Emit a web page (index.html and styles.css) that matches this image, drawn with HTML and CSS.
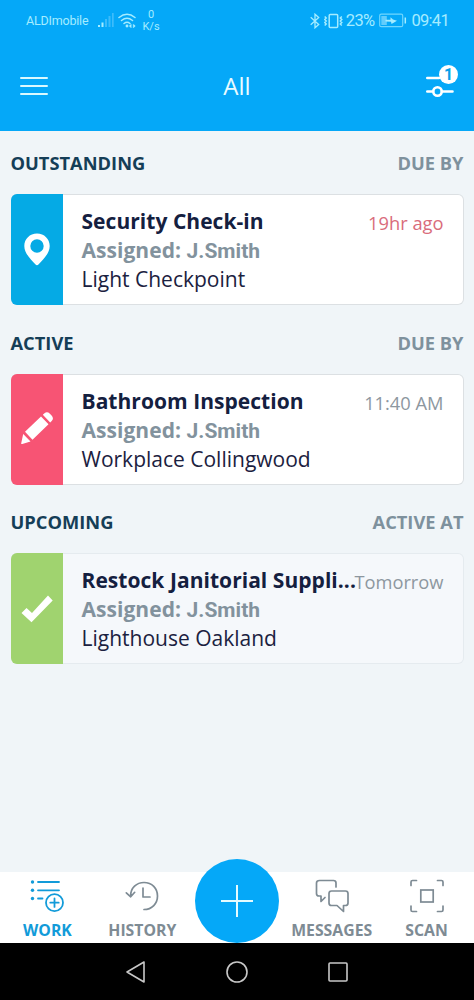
FILE: index.html
```html
<!DOCTYPE html>
<html lang="en">
<head>
<meta charset="utf-8">
<title>All work</title>
<link rel="stylesheet" href="styles.css">
</head>
<body>
<div class="phone">
  <header class="top">
    <div class="status">
      <span class="carrier">ALDImobile</span>
      <svg class="signal" width="16" height="15" viewBox="0 0 16 15"><path d="M0 12h2v2H0zM3.500 9.500h2V14h-2z" fill="#a5ecff"/><path d="M7 6h2v8H7zM10.500 3h2v11h-2zM14 0h1.700v14H14z" fill="#3dbcfb"/></svg>
      <svg class="wifi" width="18" height="15" viewBox="0 0 18 15" fill="none" stroke="#a5ecff" stroke-width="1.500" stroke-linecap="round"><path d="M1 4.500q8-6.500 16 0M3.500 7.500q5.500-4.500 11 0M6 10.500q3-2.500 6 0"/><circle cx="9" cy="13" r=".7"/><path d="M13 12l-1 1 1 1M15.500 12l1 1-1 1"/></svg>
      <span class="speed"><span>0</span><span>K/s</span></span>
      <span class="grow"></span>
      <svg class="bt" width="10" height="16" viewBox="0 0 10 16" fill="none" stroke="#a5ecff" stroke-width="1.300"><path d="M.7 4.200l8 7.300L5 14.800V1.200l3.700 3.300-8 7.300"/></svg>
      <svg class="vibrate" width="19" height="16" viewBox="0 0 19 16" fill="none" stroke="#a5ecff" stroke-width="1.500"><rect x="5.200" y="1.500" width="8.500" height="13" rx="1"/><path d="M.7 3.500l1.500 1.500-1.500 1.500L2.200 8 .7 9.500l1.500 1.500-1.500 1.500M17.800 3.500L16.300 5l1.500 1.500L16.300 8l1.500 1.500-1.500 1.500 1.500 1.500"/></svg>
      <span class="pct">23%</span>
      <svg class="battery" width="28" height="15" viewBox="0 0 28 15"><rect x=".7" y="1.200" width="23" height="12.500" rx="1.500" fill="none" stroke="#70d6fd" stroke-width="1.200"/><path d="M2.300 3h5.500v9H2.300z" fill="#62cdfc"/><path d="M6.500 6.700l5 .1V4.200L14 6.500l4 1.200-5.500 3.300-.5-2.200-5.500-.3z" fill="#a5ecff"/><path d="M26.300 4.500v6" stroke="#a5ecff" stroke-width="1.500"/></svg>
      <span class="clock">09:41</span>
    </div>
    <div class="bar">
      <svg width="28" height="20" viewBox="0 0 28 20" stroke="#d9f9ff" stroke-width="2" stroke-linecap="round"><path d="M1 2h26M1 10h26M1 18h26"/></svg>
      <h1>All</h1>
      <div class="filter">
        <svg width="28" height="22" viewBox="0 0 28 22" fill="none" stroke="#fff" stroke-width="2.600" stroke-linecap="round"><path d="M1.300 3H13M1.300 16.500H7M16 16.500h10.500"/><circle cx="11.500" cy="16.500" r="4.200"/></svg>
        <span class="badge">1</span>
      </div>
    </div>
  </header>

  <main>
    <section>
      <div class="head"><h2>OUTSTANDING</h2><span>DUE BY</span></div>
      <article class="card">
        <div class="tag blue"><svg width="28" height="34" viewBox="0 0 28 34"><path fill="#fff" fill-rule="evenodd" d="M14 .5C6.800.5 1.300 6 1.300 13 1.300 20.500 8 26.500 12.300 31.300q1.700 1.800 3.400 0C20 26.500 26.700 20.500 26.700 13 26.700 6 21.200.5 14 .5zm0 5.800a6.700 6.700 0 1 1 0 13.400 6.700 6.700 0 0 1 0-13.400z"/></svg></div>
        <div class="body">
          <h3>Security Check-in</h3><time class="late">19hr ago</time>
          <p class="who">Assigned: <span>J.Smith</span></p>
          <p class="place">Light Checkpoint</p>
        </div>
      </article>
    </section>
    <section>
      <div class="head"><h2>ACTIVE</h2><span>DUE BY</span></div>
      <article class="card">
        <div class="tag pink"><svg width="34" height="34" viewBox="0 0 34 34" fill="#fff"><path d="M1.200 31.300l2-9.300 7.300 7.400-8.200 2.600q-1.200.2-1.100-.7zM5 19.800L21 4.500l7.500 7.800-16 15.500zM22.800 2.800l1.700-1.600q2.600-2.200 5.400.5l1.700 1.900q2.600 2.900.1 5.400l-1.500 1.600z"/></svg></div>
        <div class="body">
          <h3>Bathroom Inspection</h3><time>11:40 AM</time>
          <p class="who">Assigned: <span>J.Smith</span></p>
          <p class="place">Workplace Collingwood</p>
        </div>
      </article>
    </section>
    <section>
      <div class="head"><h2>UPCOMING</h2><span>ACTIVE AT</span></div>
      <article class="card dim">
        <div class="tag green"><svg width="32" height="28" viewBox="0 0 32 28"><path fill="#fff" d="M.5 18l5-5 5.500 5L27 .5l4.700 5L10.500 27.300z"/></svg></div>
        <div class="body">
          <h3>Restock Janitorial Suppli...</h3><time>Tomorrow</time>
          <p class="who">Assigned: <span>J.Smith</span></p>
          <p class="place">Lighthouse Oakland</p>
        </div>
      </article>
    </section>
  </main>

  <nav class="tabs">
    <a class="tab on"><svg width="34" height="34" viewBox="0 0 34 34" fill="none" stroke="#129bd9" stroke-width="1.800" stroke-linecap="round"><path d="M8 3h21M8 11.300h21M8 19.500h4.500"/><g fill="#129bd9" stroke="none"><circle cx="2.500" cy="3" r="1.700"/><circle cx="2.500" cy="11.300" r="1.700"/><circle cx="2.500" cy="19.500" r="1.700"/></g><circle cx="24.500" cy="23.700" r="8.500"/><path d="M24.500 19.500v8.400M20.300 23.700h8.400"/></svg><span>WORK</span></a>
    <a class="tab"><svg width="34" height="34" viewBox="0 0 34 34" fill="none" stroke="#7e8b94" stroke-width="1.700" stroke-linecap="round" stroke-linejoin="round"><path d="M5.700 16.500C5.700 9 11.500 3.500 19 3.500c8 0 13.500 6 13.500 13.500S27 30.500 19 30.500M1.300 13.800l4.400 4 4-4.500M18 9v9h7"/></svg><span>HISTORY</span></a>
    <button class="add" aria-label="Add"><svg width="34" height="34" viewBox="0 0 34 34" stroke="#e5fbff" stroke-width="2"><path d="M17 1v32M1 17h32"/></svg></button>
    <a class="tab"><svg width="34" height="34" viewBox="0 0 34 34" fill="none" stroke="#7e8b94" stroke-width="1.700" stroke-linejoin="round" stroke-linecap="round"><path d="M21 8V4q0-2.500-2.500-2.500h-14Q1.500 1.500 1.500 4v10.500q0 2.500 2.500 2.500h2v5.500l4-4M16.500 12H30.500q2.500 0 2.500 2.500V24q0 2.500-2.500 2.500h-2v6l-6.500-6h-5.500q-2.500 0-2.500-2.500v-9.500q0-2.500 2.500-2.500z"/></svg><span>MESSAGES</span></a>
    <a class="tab"><svg width="34" height="34" viewBox="0 0 34 34" fill="none" stroke="#7e8b94" stroke-width="1.700" stroke-linecap="round"><path d="M1 6.500V3q0-1.500 1.500-1.500H6.500M27.500 1.500h4q1.500 0 1.500 1.500v3.500M33 27v4q0 1.500-1.500 1.500h-4M6.500 32.500h-4Q1 32.500 1 31v-4"/><rect x="10.800" y="11" width="12.400" height="12"/></svg><span>SCAN</span></a>
  </nav>

  <footer class="system">
    <svg width="22" height="24" viewBox="0 0 22 24" fill="none" stroke="#c8c8c8" stroke-width="1.600" stroke-linejoin="round"><path d="M19 2v20L2 12z"/></svg>
    <svg width="24" height="24" viewBox="0 0 24 24" fill="none" stroke="#c8c8c8" stroke-width="1.600"><circle cx="12" cy="12" r="10"/></svg>
    <svg width="22" height="24" viewBox="0 0 22 24" fill="none" stroke="#c8c8c8" stroke-width="1.600"><rect x="2" y="3" width="18" height="18" rx="1"/></svg>
  </footer>
</div>
</body>
</html>
```
FILE: styles.css
```css
* { box-sizing: border-box; margin: 0; padding: 0; }
body { width: 474px; height: 1000px; overflow: hidden; font-family: "Open Sans", "Noto Sans", sans-serif; }
svg { display: block; flex: none; }
.phone { width: 474px; height: 1000px; display: flex; flex-direction: column; background: #f0f5f8; }
.top { height: 131px; background: #05a8f8; }
.status { height: 41px; padding: 0 25px 0 26px; display: flex; align-items: center; color: #a5ecff; font-family: Roboto, sans-serif; font-size: 16.500px; letter-spacing: -.7px; white-space: nowrap; }
.carrier { font-size: 12.500px; width: 72px; letter-spacing: -.2px; }
.wifi { margin-left: 4px; }
.speed { margin-left: 6px; width: 18px; display: flex; flex-direction: column; text-align: center; font-size: 11px; line-height: 12px; letter-spacing: 0; }
.grow { flex: 1; }
.vibrate { margin: 0 3px 0 4px; }
.battery { margin: 0 4px 0 5px; }
.bar { height: 90px; padding: 0 16px 0 20px; display: flex; align-items: center; justify-content: space-between; }
.bar h1 { font-weight: 400; font-size: 24px; line-height: 33px; color: #e9fbff; padding-bottom: 2px; }
.filter { position: relative; width: 32px; height: 22px; }
.badge { position: absolute; left: 13px; top: -10px; width: 19px; height: 19px; border-radius: 50%; background: #fff; color: #089fe8; font: 700 16px/19px Roboto, sans-serif; text-align: center; }
main { height: 741px; padding: 0 10.500px; }
section { height: 179.700px; }
.head { height: 63px; display: flex; align-items: center; justify-content: space-between; font-size: 18.300px; color: #7e919d; font-weight: 700; }
.head h2 { font-size: 18.300px; color: #153e57; font-weight: 700; }
.card { height: 111px; display: flex; background: #fff; border: 1px solid #dce0e3; border-left: 0; border-radius: 6px; }
.dim { background: #f5f8fb; border-color: #e5ebef; }
.tag { width: 52.500px; margin: -1px 0; border-radius: 6px 0 0 6px; display: flex; align-items: center; justify-content: center; }
.blue { background: #05aae5; }
.pink { background: #f75474; }
.green { background: #a0d36f; }
.body { flex: 1; padding: 12px 19px 0 18.500px; display: grid; grid-template-columns: 1fr auto; grid-template-rows: 29px 29px 29px; white-space: nowrap; line-height: 29px; color: #1b2140; }
h3 { font-size: 21px; letter-spacing: .04px; font-weight: 700; min-width: 0; color: #14203f; }
time { font-size: 18.300px; color: #8d979f; padding-top: 1px; }
.late { color: #d96c7b; }
.who { grid-column: 1 / 3; font-size: 21px; letter-spacing: .04px; font-weight: 700; color: #82929d; }
.who span { font-family: Roboto, sans-serif; }
.place { grid-column: 1 / 3; font-size: 21px; }
.tabs { height: 71px; background: #fff; display: flex; }
.tab { width: 95px; height: 71px; padding-top: 7px; display: flex; flex-direction: column; align-items: center; gap: 7px; color: #7e8b94; font-size: 15.800px; font-weight: 700; line-height: 21px; }
.on { color: #129bd9; }
.add { flex: none; width: 84px; height: 84px; margin: -13px 5.500px 0 5px; border: 0; border-radius: 50%; background: #05a8f8; display: flex; align-items: center; justify-content: center; }
.system { height: 57px; background: #000; display: flex; align-items: center; justify-content: center; gap: 78px; }
```
